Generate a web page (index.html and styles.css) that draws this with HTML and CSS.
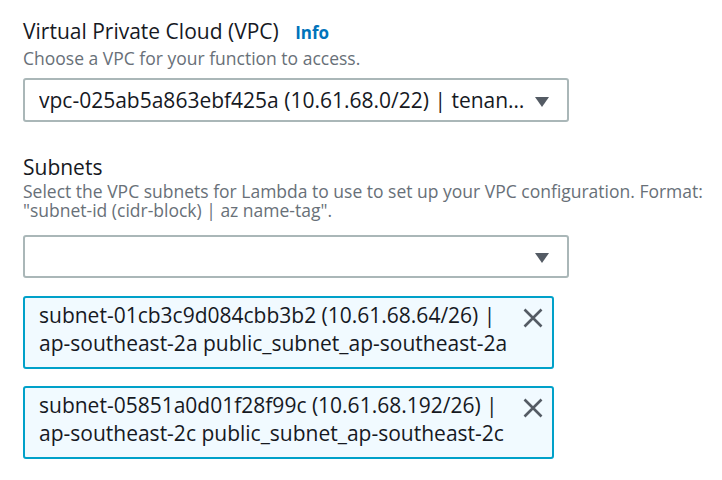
FILE: index.html
```html
<!DOCTYPE html>
<html lang="en">
<head>
    <meta charset="UTF-8">
    <title>Lambda VPC settings</title>
    <link rel="stylesheet" href="styles.css">
</head>
<body>

<div class="form">
    <!-- VPC -->
    <div class="field">
        <div class="label">Virtual Private Cloud (VPC) <a class="info" href="#">Info</a></div>
        <div class="desc">Choose a VPC for your function to access.</div>
        <div class="select">
            <span class="value">vpc-025ab5a863ebf425a (10.61.68.0/22) | tenan…</span>
            <span class="caret"></span>
        </div>
    </div>

    <!-- Subnets -->
    <div class="field subnets">
        <div class="label">Subnets</div>
        <div class="desc">Select the VPC subnets for Lambda to use to set up your VPC configuration. Format: "subnet-id (cidr-block) | az name-tag".</div>
        <div class="select empty">
            <span class="value"></span>
            <span class="caret"></span>
        </div>

        <div class="token">
            <span class="token-text"><span class="nw">subnet-01cb3c9d084cbb3b2 (10.61.68.64/26) |</span> <span class="nw">ap-southeast-2a</span> <span class="nw">public_subnet_ap-southeast-2a</span></span>
            <svg class="dismiss" width="20" height="20" viewBox="0 0 20 20"><path d="M1.5 1.5 L18.5 18.5 M18.5 1.5 L1.5 18.5" stroke="#545b64" stroke-width="2.6" fill="none"/></svg>
        </div>
        <div class="token">
            <span class="token-text"><span class="nw">subnet-05851a0d01f28f99c (10.61.68.192/26) |</span> <span class="nw">ap-southeast-2c</span> <span class="nw">public_subnet_ap-southeast-2c</span></span>
            <svg class="dismiss" width="20" height="20" viewBox="0 0 20 20"><path d="M1.5 1.5 L18.5 18.5 M18.5 1.5 L1.5 18.5" stroke="#545b64" stroke-width="2.6" fill="none"/></svg>
        </div>
    </div>
</div>

</body>
</html>
```

FILE: styles.css
```css
body {
    margin: 0;
    background-color: #ffffff;
    font-family: "Open Sans", "Noto Sans", sans-serif;
    color: #16191f;
}
.form {
    padding: 18px 0 0 23px;
}
.label {
    font-size: 21px;
    line-height: 26px;
}
.info {
    margin-left: 11px;
    color: #0073bb;
    font-weight: bold;
    font-size: 17px;
    text-decoration: none;
}
.desc {
    margin-top: 2px;
    color: #687078;
    font-size: 17.5px;
    line-height: 20px;
    max-width: 695px;
}
.select {
    box-sizing: border-box;
    margin-top: 10px;
    width: 546px;
    height: 44px;
    border: 2px solid #aab7b8;
    border-radius: 3px;
    display: flex;
    align-items: center;
    padding: 0 18px 0 14px;
}
.select .value {
    flex: 1;
    font-size: 21px;
    white-space: nowrap;
    overflow: hidden;
}
.caret {
    margin-top: 4px;
    width: 0;
    height: 0;
    border-left: 7px solid transparent;
    border-right: 7px solid transparent;
    border-top: 10px solid #545b64;
}
.subnets {
    margin-top: 32px;
}
.subnets .desc {
    line-height: 19px;
}
.select.empty {
    margin-top: 15px;
    height: 43px;
}
.select.empty .caret {
    margin-top: 2px;
}
.token {
    box-sizing: border-box;
    margin-top: 17px;
    width: 531px;
    border: 2px solid #00a1c9;
    border-radius: 3px;
    background-color: #f1faff;
    display: flex;
    align-items: flex-start;
    padding: 3px 9px 10px 14px;
}
.select.empty + .token {
    margin-top: 18px;
}
.token-text {
    flex: 1;
    font-size: 21px;
    line-height: 28px;
    padding-right: 8px;
}
.nw {
    white-space: nowrap;
}
.dismiss {
    margin-top: 7px;
    flex-shrink: 0;
}
```
